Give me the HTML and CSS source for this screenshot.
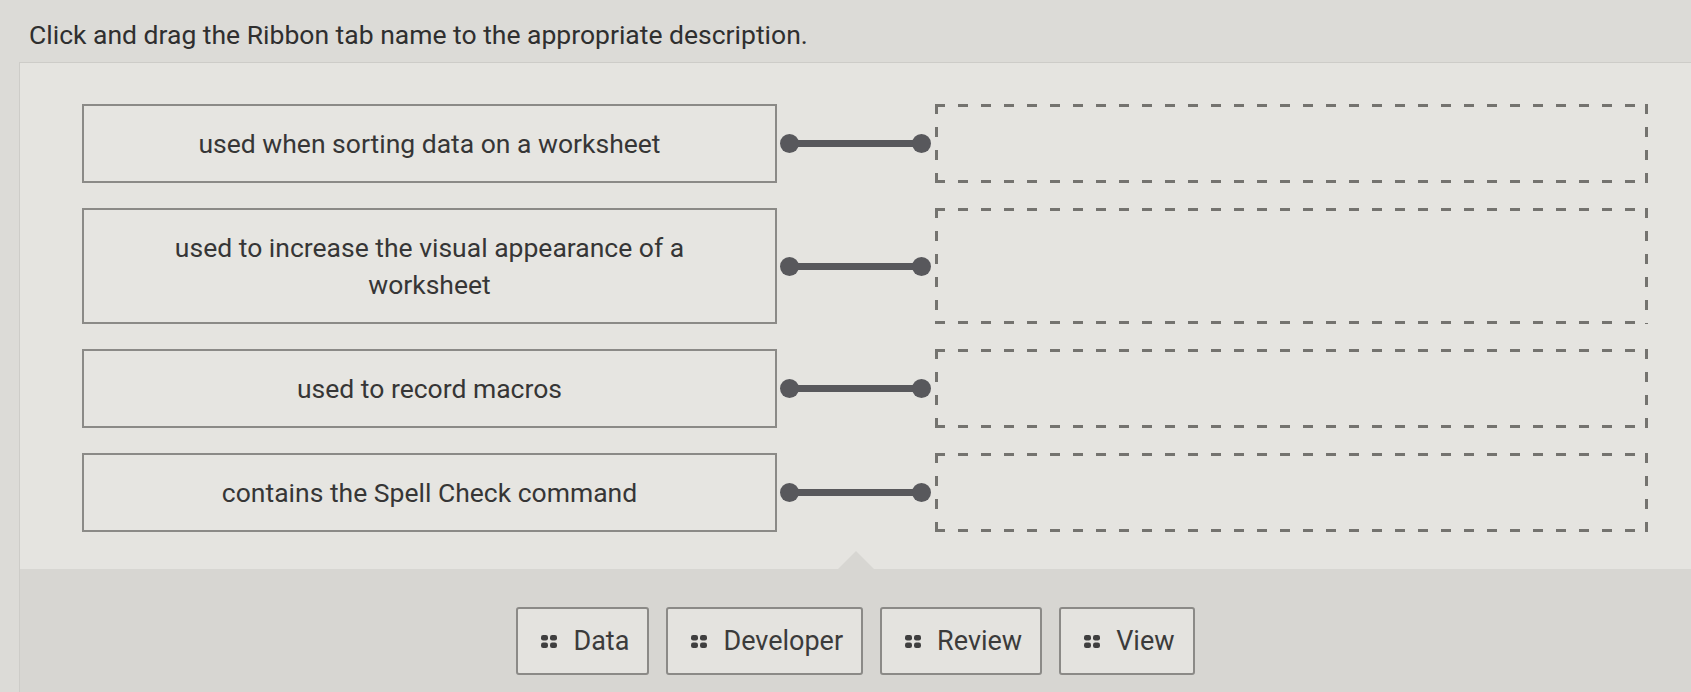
FILE: index.html
```html
<!DOCTYPE html>
<html lang="en">
<head>
<meta charset="utf-8">
<title>Ribbon tab matching</title>
<link rel="stylesheet" href="styles.css">
</head>
<body>
<div class="page">
  <h1 class="prompt">Click and drag the Ribbon tab name to the appropriate description.</h1>
  <div class="panel">
    <div class="matches">
      <div class="row">
        <div class="desc">used when sorting data on a worksheet</div>
        <div class="link"><span class="dot"></span><span class="bar"></span><span class="dot"></span></div>
        <div class="drop"></div>
      </div>
      <div class="row">
        <div class="desc">used to increase the visual appearance of a worksheet</div>
        <div class="link"><span class="dot"></span><span class="bar"></span><span class="dot"></span></div>
        <div class="drop"></div>
      </div>
      <div class="row">
        <div class="desc">used to record macros</div>
        <div class="link"><span class="dot"></span><span class="bar"></span><span class="dot"></span></div>
        <div class="drop"></div>
      </div>
      <div class="row">
        <div class="desc">contains the Spell Check command</div>
        <div class="link"><span class="dot"></span><span class="bar"></span><span class="dot"></span></div>
        <div class="drop"></div>
      </div>
    </div>
    <div class="bank">
      <div class="chip"><svg class="grip" viewBox="0 0 16 13"><rect x="0" y="0" width="7" height="5.5" rx="2.2"/><rect x="9" y="0" width="7" height="5.5" rx="2.2"/><rect x="0" y="7.5" width="7" height="5.5" rx="2.2"/><rect x="9" y="7.5" width="7" height="5.5" rx="2.2"/></svg><span>Data</span></div>
      <div class="chip"><svg class="grip" viewBox="0 0 16 13"><rect x="0" y="0" width="7" height="5.5" rx="2.2"/><rect x="9" y="0" width="7" height="5.5" rx="2.2"/><rect x="0" y="7.5" width="7" height="5.5" rx="2.2"/><rect x="9" y="7.5" width="7" height="5.5" rx="2.2"/></svg><span>Developer</span></div>
      <div class="chip"><svg class="grip" viewBox="0 0 16 13"><rect x="0" y="0" width="7" height="5.5" rx="2.2"/><rect x="9" y="0" width="7" height="5.5" rx="2.2"/><rect x="0" y="7.5" width="7" height="5.5" rx="2.2"/><rect x="9" y="7.5" width="7" height="5.5" rx="2.2"/></svg><span>Review</span></div>
      <div class="chip"><svg class="grip" viewBox="0 0 16 13"><rect x="0" y="0" width="7" height="5.5" rx="2.2"/><rect x="9" y="0" width="7" height="5.5" rx="2.2"/><rect x="0" y="7.5" width="7" height="5.5" rx="2.2"/><rect x="9" y="7.5" width="7" height="5.5" rx="2.2"/></svg><span>View</span></div>
    </div>
  </div>
</div>
</body>
</html>
```

FILE: styles.css
```css
html, body {
  margin: 0;
  padding: 0;
}
body {
  background: #dcdbd7;
  font-family: Roboto, "Liberation Sans", sans-serif;
  color: #353535;
  height: 692px;
  overflow: hidden;
}
.page {
  display: flex;
  flex-direction: column;
  height: 692px;
}
.prompt {
  margin: 0;
  padding: 20px 0 0 29px;
  height: 62px;
  box-sizing: border-box;
  font-size: 26.5px;
  font-weight: 400;
  line-height: 30px;
  color: #2f2f2f;
}
.panel {
  flex: 1;
  margin-left: 19px;
  border-top: 1px solid #cdccc8;
  border-left: 1px solid #cdccc8;
  background: #e5e4e0;
  display: flex;
  flex-direction: column;
}
.matches {
  display: flex;
  flex-direction: column;
  gap: 25px;
  padding: 41px 0 37px 62px;
}
.row {
  display: grid;
  grid-template-columns: 695px 158px 713px;
  align-items: stretch;
}
.desc {
  border: 2px solid #8b8a87;
  padding: 19px 80px;
  text-align: center;
  font-size: 26.5px;
  line-height: 37px;
  color: #363636;
  background: #e6e5e1;
}
.link {
  display: flex;
  align-items: center;
  padding: 0 4px 0 3px;
}
.dot {
  width: 19px;
  height: 19px;
  border-radius: 50%;
  background: #58585c;
  flex: none;
}
.bar {
  flex: 1;
  height: 7px;
  background: #58585c;
  margin: 0 -2px;
}
.drop {
  background:
    repeating-linear-gradient(90deg, #74736f 0 10px, transparent 10px 23px) left top / 100% 3px no-repeat,
    repeating-linear-gradient(90deg, #74736f 0 10px, transparent 10px 23px) left bottom / 100% 3px no-repeat,
    repeating-linear-gradient(180deg, #74736f 0 10px, transparent 10px 23px) left top / 3px 100% no-repeat,
    repeating-linear-gradient(180deg, #74736f 0 10px, transparent 10px 23px) right top / 3px 100% no-repeat;
}
.bank {
  position: relative;
  flex: 1;
  background: #d7d6d2;
  display: flex;
  justify-content: center;
  align-items: flex-start;
  gap: 17px;
  padding-top: 38px;
}
.bank::before {
  content: "";
  position: absolute;
  top: -18px;
  left: 50%;
  margin-left: -18px;
  border-left: 18px solid transparent;
  border-right: 18px solid transparent;
  border-bottom: 18px solid #d7d6d2;
}
.chip {
  display: flex;
  align-items: center;
  gap: 16px;
  height: 68px;
  box-sizing: border-box;
  padding: 0 18px 0 23px;
  border: 2px solid #8b8a87;
  border-radius: 3px;
  background: #e4e3df;
  font-size: 27px;
  color: #3b3b3b;
}
.grip {
  width: 16px;
  height: 13px;
  fill: #3f3f3f;
  flex: none;
}
```
